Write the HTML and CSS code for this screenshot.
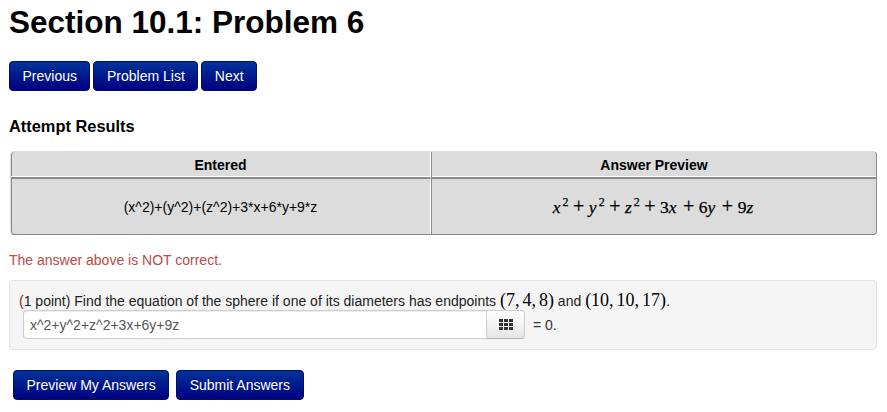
FILE: index.html
```html
<!DOCTYPE html>
<html lang="en">
<head>
    <meta charset="UTF-8">
    <title>Section 10.1: Problem 6</title>
    <link rel="stylesheet" href="styles.css">
</head>
<body>
    <h1>Section 10.1: Problem 6</h1>

    <div class="nav-buttons">
        <a class="btn" href="#">Previous</a>
        <a class="btn" href="#">Problem List</a>
        <a class="btn" href="#">Next</a>
    </div>

    <h2>Attempt Results</h2>

    <table class="results">
        <tr>
            <th class="col-entered">Entered</th>
            <th>Answer Preview</th>
        </tr>
        <tr>
            <td>(x^2)+(y^2)+(z^2)+3*x+6*y+9*z</td>
            <td class="math preview"><i>x</i><sup>2</sup><span class="op">+</span><i>y</i><sup>2</sup><span class="op">+</span><i>z</i><sup>2</sup><span class="op">+</span>3<i>x</i><span class="op">+</span>6<i>y</i><span class="op">+</span>9<i>z</i></td>
        </tr>
    </table>

    <p class="feedback">The answer above is NOT correct.</p>

    <div class="problem">
        <p class="question"><span class="point-open">(</span>1 point) Find the equation of the sphere if one of its diameters has endpoints <span class="math inline">(7, 4, 8)</span> and <span class="math inline">(10, 10, 17)</span>.</p>
        <div class="answer-row">
            <input class="answer" type="text" value="x^2+y^2+z^2+3x+6y+9z">
            <button class="grid-btn" type="button" aria-label="Equation editor">
                <svg width="14" height="11" viewBox="0 0 14 11">
                    <path fill="#333" d="M0 0h4v3H0zM5 0h4v3H5zM10 0h4v3h-4zM0 4h4v3H0zM5 4h4v3H5zM10 4h4v3h-4zM0 8h4v3H0zM5 8h4v3H5zM10 8h4v3h-4z"/>
                </svg>
            </button>
            <span class="equals">= 0.</span>
        </div>
    </div>

    <div class="submit-buttons">
        <a class="btn" href="#">Preview My Answers</a>
        <a class="btn" href="#">Submit Answers</a>
    </div>
</body>
</html>
```

FILE: styles.css
```css
body {
    margin: 0;
    padding: 0 10px 0 9px;
    font-family: "Liberation Sans", Arial, sans-serif;
    font-size: 14px;
    line-height: 20px;
    color: #333;
    background-color: #fff;
}
h1 {
    margin: 0;
    padding-top: 2px;
    font-size: 31.5px;
    line-height: 40px;
    font-weight: bold;
    color: #000;
}
.nav-buttons {
    display: flex;
    gap: 3px;
    margin-top: 19px;
}
.btn {
    display: block;
    height: 30px;
    padding: 0 12.5px;
    box-sizing: border-box;
    line-height: 28px;
    font-size: 14px;
    color: #fff;
    text-decoration: none;
    text-shadow: 0 -1px 0 rgba(0,0,0,0.25);
    background-color: #00207f;
    background-image: linear-gradient(to bottom, #003399, #000080);
    border: 1px solid #000f66;
    border-radius: 4px;
}
h2 {
    margin: 25px 0 0;
    font-size: 16.4px;
    line-height: 20px;
    font-weight: bold;
    color: #000;
}
.results {
    width: 867px;
    margin: 15px 0 0 1px;
    border-collapse: separate;
    border-spacing: 0;
    background-color: #dcdcdc;
    border: 1px solid #ddd;
    border-right-color: #8a8a8a;
    border-bottom-color: #8a8a8a;
    border-radius: 4px;
    font-size: 14px;
    color: #000;
    box-shadow: inset 1px 0 0 #8a8a8a;
}
.results th {
    height: 25px;
    padding: 0;
    font-size: 14px;
    line-height: 16px;
    text-align: center;
    border-bottom: 2px solid #8a8a8a;
    box-shadow: inset 0 -1px 0 #fff;
}
.results td {
    height: 55px;
    padding: 0;
    text-align: center;
}
.col-entered {
    width: 419px;
}
.results th:first-child, .results td:first-child {
    border-right: 1px solid #fff;
}
.results th + th, .results td + td {
    border-left: 1px solid #8a8a8a;
}
.math {
    font-family: "Liberation Serif", "Times New Roman", serif;
    color: #000;
}
.preview {
    font-size: 17.5px;
    -webkit-text-stroke: 0.25px #000;
}
.preview i {
    letter-spacing: 2px;
}
.preview sup {
    font-size: 12px;
    line-height: 0;
}
.op {
    margin: 0 4.5px;
    font-size: 20px;
    line-height: 0;
}
.feedback {
    margin: 15px 0 0;
    color: #b94a48;
    font-size: 14px;
    line-height: 20px;
}
.problem {
    height: 70px;
    box-sizing: border-box;
    margin-top: 10px;
    padding: 10px 9px;
    background-color: #f5f5f5;
    border: 1px solid #e3e3e3;
    border-radius: 4px;
}
.question {
    margin: 0;
    line-height: 20px;
    font-size: 14px;
    color: #222;
}
.point-open {
    color: #8a1c1c;
}
.inline {
    font-size: 18px;
    line-height: 0;
    word-spacing: -1.5px;
}
.answer-row {
    display: flex;
    align-items: center;
    margin: -1px 0 0 4px;
}
.answer {
    width: 463px;
    height: 29px;
    box-sizing: border-box;
    padding: 4px 6px;
    font-family: "Liberation Sans", Arial, sans-serif;
    font-size: 14px;
    color: #555;
    background-color: #fff;
    border: 1px solid #ccc;
    border-right: none;
    border-radius: 4px 0 0 4px;
    box-shadow: inset 0 1px 1px rgba(0,0,0,0.075);
}
.grid-btn {
    display: flex;
    align-items: center;
    justify-content: center;
    width: 39px;
    height: 29px;
    padding: 0;
    background-image: linear-gradient(to bottom, #fff, #e6e6e6);
    border: 1px solid #ccc;
    border-bottom-color: #b3b3b3;
    border-radius: 0 4px 4px 0;
}
.equals {
    margin-left: 8px;
    font-size: 14px;
}
.submit-buttons {
    display: flex;
    gap: 7px;
    margin: 20px 0 0 4px;
}
```
